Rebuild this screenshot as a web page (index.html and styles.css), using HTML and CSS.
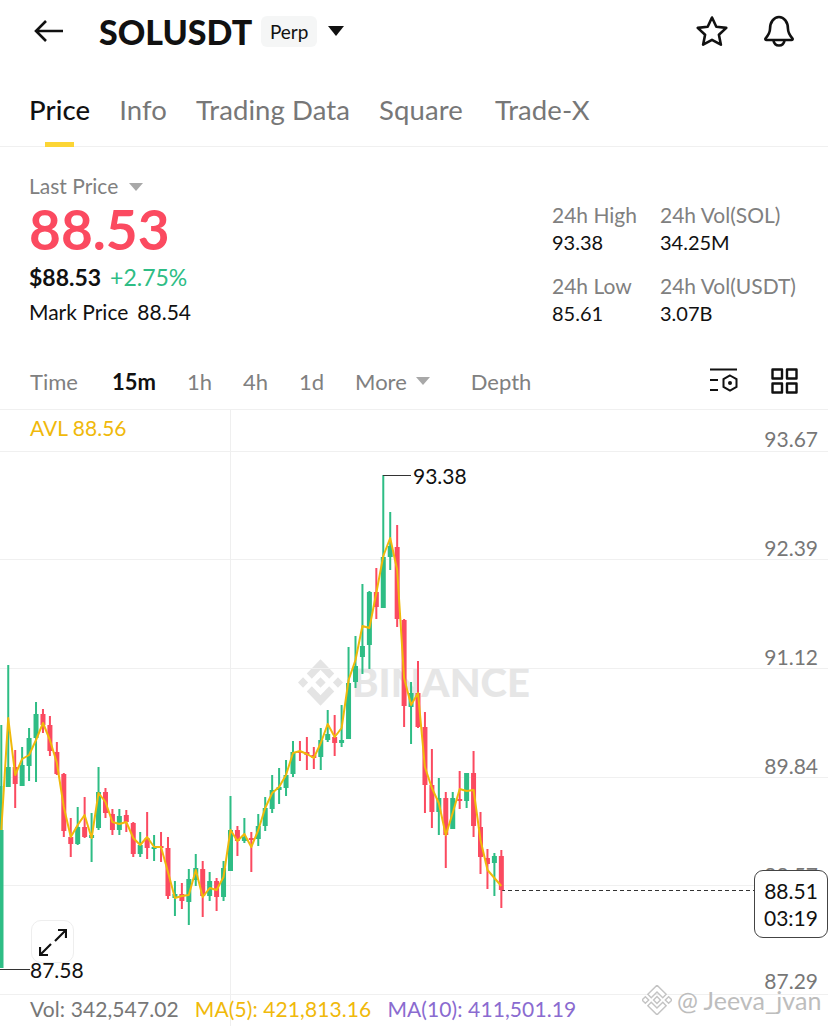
FILE: index.html
```html
<!DOCTYPE html>
<html lang="en">

<head>
    <meta charset="UTF-8">
    <meta name="viewport" content="width=device-width, initial-scale=1.0">
    <title>SOLUSDT Perp</title>
    <link rel="stylesheet" href="styles.css">
</head>

<body>

    <header class="top-bar">
        <svg class="back-icon" width="30" height="24" viewBox="0 0 30 24">
            <path d="M12 2 2 12l10 10M2 12h27" fill="none" stroke="#111" stroke-width="2.6" />
        </svg>
        <h1>SOLUSDT</h1>
        <span class="pill">Perp</span>
        <span class="caret caret-dark"></span>
        <div class="top-actions">
            <svg width="34" height="32" viewBox="0 0 34 32">
                <path d="M17 2.5l4.3 9.2 10 1.2-7.4 6.9 2 9.9L17 24.8l-8.9 4.9 2-9.9-7.4-6.9 10-1.2z" fill="none" stroke="#111" stroke-width="2.6" stroke-linejoin="round" />
            </svg>
            <svg width="32" height="34" viewBox="0 0 32 34">
                <path d="M7 15c0-7 4-12 9-12s9 5 9 12c0 4 1.5 6 4.5 9.5.5.8 0 1.5-1 1.5H3.500c-1 0-1.500-.7-1-1.500C5.500 21 7 19 7 15z" fill="none" stroke="#111" stroke-width="2.6" stroke-linejoin="round" />
                <path d="M10.5 26.500c.5 3 2.800 5 5.500 5s5-2 5.500-5" fill="none" stroke="#111" stroke-width="2.6" />
            </svg>
        </div>
    </header>

    <nav class="tabs">
        <a class="tab active">Price</a>
        <a class="tab">Info</a>
        <a class="tab">Trading Data</a>
        <a class="tab">Square</a>
        <a class="tab">Trade-X</a>
    </nav>

    <section class="summary">
        <div class="price-col">
            <div class="last-price">Last Price <span class="caret caret-grey"></span></div>
            <div class="big-price">88.53</div>
            <div class="usd-row"><b>$88.53</b> <span class="up">+2.75%</span></div>
            <div class="mark-row"><span>Mark Price</span><span>88.54</span></div>
        </div>
        <div class="stats">
            <div class="stat">
                <span class="stat-label">24h High</span>
                <span class="stat-value">93.38</span>
            </div>
            <div class="stat">
                <span class="stat-label">24h Vol(SOL)</span>
                <span class="stat-value">34.25M</span>
            </div>
            <div class="stat">
                <span class="stat-label">24h Low</span>
                <span class="stat-value">85.61</span>
            </div>
            <div class="stat">
                <span class="stat-label">24h Vol(USDT)</span>
                <span class="stat-value">3.07B</span>
            </div>
        </div>
    </section>

    <div class="periods">
        <span class="period p-time">Time</span>
        <span class="period p-15m">15m</span>
        <span class="period">1h</span>
        <span class="period">4h</span>
        <span class="period">1d</span>
        <span class="period p-more">More</span>
        <span class="caret caret-grey"></span>
        <span class="period">Depth</span>
        <div class="period-icons">
            <svg width="28" height="26" viewBox="0 0 28 26">
                <path d="M0 1.500h27M0 12h8M0 22h8" fill="none" stroke="#111" stroke-width="2" />
                <path d="M20 7.500l6.500 3.700v7.600L20 22.500l-6.500-3.700v-7.600z" fill="none" stroke="#111" stroke-width="2" />
                <circle cx="20" cy="15" r="2" fill="#111" />
            </svg>
            <svg width="27" height="26" viewBox="0 0 27 26">
                <path d="M1.500 1.500h9.500v9H1.500zM16 1.500h9.500v9H16zM1.500 15.500h9.500v9H1.500zM16 15.500h9.500v9H16z" fill="none" stroke="#111" stroke-width="2.4" stroke-linejoin="round" />
            </svg>
        </div>
    </div>

    <section class="chart" id="chart">
        <div class="wm-main">
            <svg width="45" height="47" viewBox="0 0 126 126" preserveAspectRatio="none">
                <path d="M38.73 53.2 63 28.93 87.29 53.22l14.13-14.13L63 .67 24.6 39.07zM0 63l14.13-14.13L28.26 63 14.13 77.13zM38.73 72.8 63 97.07l24.29-24.29 14.13 14.12L63 125.33 24.6 86.93zM97.74 63l14.13-14.13L126 63l-14.13 14.13zM77.33 63 63 48.67 48.7 62.97 63 77.3z" fill="#e4e4e4" />
            </svg>
            <span>BINANCE</span>
        </div>

        <svg id="chart-svg" class="chart-svg" width="828" height="616" viewBox="0 410 828 616"></svg>

        <div class="avl">AVL 88.56</div>

        <div class="axis-label axis-1">93.67</div>
        <div class="axis-label axis-2">92.39</div>
        <div class="axis-label axis-3">91.12</div>
        <div class="axis-label axis-4">89.84</div>
        <div class="axis-label axis-5">88.57</div>
        <div class="axis-label axis-6">87.29</div>

        <div class="peak-label peak-high">93.38</div>

        <button class="expand-btn">
            <svg width="28" height="28" viewBox="0 0 28 28">
                <path d="M19 2h8v8M27 2 16 13M1 19v8h8M1 27l11-11" fill="none" stroke="#111" stroke-width="2.2" />
            </svg>
        </button>

        <div class="peak-label peak-low">87.58</div>

        <div class="mark-box">
            <span>88.51</span>
            <span>03:19</span>
        </div>

        <div class="vol-row">
            <span class="vol">Vol: 342,547.02</span>
            <span class="ma5">MA(5): 421,813.16</span>
            <span class="ma10">MA(10): 411,501.19</span>
        </div>

        <div class="wm-user">
            <svg width="30" height="30" viewBox="0 0 126 126">
                <path d="M38.73 53.2 63 28.93 87.29 53.22l14.13-14.13L63 .67 24.6 39.07zM0 63l14.13-14.13L28.26 63 14.13 77.13zM38.73 72.8 63 97.07l24.29-24.29 14.13 14.12L63 125.33 24.6 86.93zM97.74 63l14.13-14.13L126 63l-14.13 14.13zM77.33 63 63 48.67 48.7 62.97 63 77.3z" fill="#fff" stroke="#c4c4c4" stroke-width="6" />
            </svg>
            <span>@ Jeeva_jvan</span>
        </div>
    </section>

    <script src="chart.js"></script>

</body>

</html>
```

FILE: styles.css
```css
body, html {
    margin: 0;
    padding: 0;
    background: #fff;
    color: #111;
    font-family: 'Lato', sans-serif;
}

body {
    width: 828px;
    height: 1026px;
    overflow: hidden;
    display: flex;
    flex-direction: column;
}

/* top bar */
.top-bar {
    height: 62px;
    display: flex;
    align-items: center;
    padding: 0 33px 0 34px;
}

.back-icon {
    margin-right: 35px;
}

.top-bar h1 {
    font-size: 34px;
    font-weight: 900;
    margin: 0 9px 0 0;
}

.pill {
    width: 56px;
    height: 31px;
    line-height: 31px;
    text-align: center;
    background: #f5f6f6;
    border-radius: 6px;
    font-size: 19px;
    margin-right: 11px;
}

.caret {
    display: inline-block;
    width: 0;
    height: 0;
    border-left: 8px solid transparent;
    border-right: 8px solid transparent;
}

.caret-dark {
    border-top: 10px solid #111;
}

.caret-grey {
    border-left-width: 7px;
    border-right-width: 7px;
    border-top: 8px solid #a8a8a8;
}

.top-actions {
    margin-left: auto;
    display: flex;
    align-items: center;
    gap: 34px;
}

/* tabs */
.tabs {
    height: 85px;
    display: flex;
    gap: 29px;
    padding-left: 29px;
    border-bottom: 1px solid #f0f0f0;
    box-sizing: border-box;
}

.tab {
    font-size: 27.5px;
    line-height: 96px;
    color: #777;
    position: relative;
    letter-spacing: 0.1px;
}

.tab:last-child {
    margin-left: 3px;
}

.tab.active {
    color: #111;
    font-weight: 500;
}

.tab.active::after {
    content: "";
    position: absolute;
    left: 16px;
    bottom: -1px;
    width: 29px;
    height: 5px;
    background: #fcd535;
}

/* price summary */
.summary {
    height: 200px;
    display: flex;
    justify-content: space-between;
    box-sizing: border-box;
    padding: 26px 0 0 29px;
}

.last-price {
    font-size: 21px;
    line-height: 26px;
    color: #808080;
}

.last-price .caret {
    margin-left: 5px;
    vertical-align: 3px;
}

.big-price {
    font-size: 55px;
    font-weight: 700;
    line-height: 60px;
    color: #fb4a60;
}

.usd-row {
    font-size: 23px;
    line-height: 32px;
    margin-top: 2px;
}

.usd-row b {
    font-weight: 700;
}

.up {
    color: #2ebd85;
    margin-left: 3px;
}

.mark-row {
    font-size: 21px;
    line-height: 28px;
    margin-top: 5px;
    display: flex;
    gap: 9px;
}

.stats {
    width: 276px;
    display: grid;
    grid-template-columns: 108px 168px;
    grid-auto-rows: 71px;
    padding-top: 28px;
}

.stat {
    display: flex;
    flex-direction: column;
    gap: 1px;
    font-size: 20px;
    line-height: 27px;
}

.stat-label {
    color: #808080;
    font-size: 21px;
}

/* period row */
.periods {
    height: 63px;
    display: flex;
    align-items: center;
    padding: 6px 30px 0;
    font-size: 22px;
    color: #808080;
    border-bottom: 1px solid #f0f0f0;
    box-sizing: border-box;
}

.period {
    margin-right: 31px;
}

.p-time {
    margin-right: 34px;
}

.p-15m {
    color: #111;
    font-weight: 700;
}

.p-more {
    margin-right: 9px;
}

.periods .caret {
    margin-right: 41px;
}

.period-icons {
    margin-left: auto;
    display: flex;
    gap: 33px;
}

/* chart */
.chart {
    position: relative;
    flex: 1;
    font-size: 21px;
}

.chart-svg {
    position: absolute;
    left: 0;
    top: 0;
}

.avl {
    position: absolute;
    left: 30px;
    top: 5px;
    color: #f0b90b;
}

.axis-label {
    position: absolute;
    right: 10px;
    color: #777;
    line-height: 22px;
}

.axis-1 { top: 18px; }
.axis-2 { top: 127px; }
.axis-3 { top: 236px; }
.axis-4 { top: 345px; }
.axis-5 { top: 454px; }
.axis-6 { top: 560px; }

.peak-label {
    position: absolute;
    color: #111;
}

.peak-high { left: 413px; top: 53px; }
.peak-low { left: 30px; top: 547px; }

.mark-box {
    position: absolute;
    left: 754px;
    top: 460px;
    width: 72px;
    height: 66px;
    background: #fff;
    border: 1px solid #444;
    border-radius: 9px;
    display: flex;
    flex-direction: column;
    align-items: center;
    justify-content: center;
    line-height: 27px;
    color: #111;
}

.expand-btn {
    position: absolute;
    left: 31px;
    top: 510px;
    width: 43px;
    height: 43px;
    padding: 0;
    background: #fff;
    border: 1px solid #eee;
    border-radius: 10px;
    display: flex;
    align-items: center;
    justify-content: center;
}

.wm-main {
    position: absolute;
    left: 298px;
    top: 248px;
    display: flex;
    align-items: center;
    gap: 9px;
    font-size: 40px;
    font-weight: 900;
    color: #e6e6e6;
}

.vol-row {
    position: absolute;
    left: 30px;
    top: 586px;
    display: flex;
    gap: 16px;
    color: #777;
    letter-spacing: 0.1px;
}

.ma5 { color: #f0b90b; }
.ma10 { color: #8a6bd0; }

.wm-user {
    position: absolute;
    left: 642px;
    top: 575px;
    display: flex;
    align-items: center;
    gap: 5px;
    font-size: 25px;
    color: #bdbdbd;
}

.wm-user span {
    line-height: 20px;
}
```

FILE: chart.js
```js
const svg = document.getElementById('chart-svg');
const NS = 'http://www.w3.org/2000/svg';

const GREEN = '#2ebd85';
const RED = '#fb4a60';

// type, wick top, wick bottom, body top, body bottom
const candles = [
    ['g', 725, 786, 786, 968],
    ['g', 665, 787, 767, 787], ['r', 750, 808, 767, 784], ['g', 747, 786, 765, 786],
    ['g', 728, 781, 738, 766], ['g', 702, 782, 714, 738], ['r', 709, 733, 714, 725],
    ['r', 716, 756, 725, 751], ['r', 742, 775, 752, 774], ['r', 773, 837, 774, 831],
    ['r', 818, 857, 837, 844], ['g', 807, 845, 827, 844], ['r', 797, 838, 827, 837],
    ['g', 813, 862, 835, 838], ['g', 767, 830, 792, 828], ['r', 788, 818, 792, 813],
    ['r', 809, 835, 814, 830], ['g', 809, 835, 816, 830], ['r', 810, 832, 815, 822],
    ['r', 822, 857, 823, 854], ['g', 832, 857, 845, 854], ['r', 812, 859, 838, 848],
    ['g', 835, 861, 847, 848], ['r', 832, 862, 846, 847], ['r', 837, 899, 848, 896],
    ['g', 881, 916, 894, 898], ['r', 883, 909, 894, 901], ['g', 869, 925, 879, 902],
    ['g', 854, 886, 868, 880], ['r', 861, 917, 869, 896], ['g', 872, 901, 881, 896],
    ['r', 878, 911, 881, 897], ['g', 861, 901, 868, 897], ['g', 796, 871, 830, 871],
    ['r', 826, 856, 830, 841], ['g', 818, 843, 837, 841], ['r', 832, 872, 838, 840],
    ['g', 814, 846, 826, 839], ['g', 797, 831, 808, 826], ['g', 775, 813, 790, 809],
    ['g', 768, 804, 787, 790], ['g', 760, 796, 775, 788], ['g', 741, 777, 752, 774],
    ['r', 741, 761, 751, 752], ['r', 737, 770, 752, 755], ['r', 747, 769, 755, 758],
    ['g', 728, 770, 740, 757], ['g', 710, 742, 734, 740], ['r', 715, 756, 737, 743],
    ['g', 705, 747, 740, 743], ['g', 647, 739, 683, 739], ['g', 636, 688, 666, 682],
    ['g', 584, 674, 646, 657], ['g', 591, 669, 592, 645], ['r', 568, 619, 592, 607],
    ['g', 475, 608, 557, 608], ['g', 512, 570, 546, 557], ['r', 525, 627, 547, 619],
    ['r', 619, 727, 620, 706], ['g', 682, 744, 693, 707], ['r', 661, 728, 693, 727],
    ['r', 712, 813, 727, 785], ['r', 749, 828, 785, 812], ['g', 778, 835, 798, 812],
    ['r', 792, 868, 798, 835], ['g', 792, 829, 798, 829], ['r', 771, 809, 799, 801],
    ['g', 773, 808, 773, 801], ['r', 751, 837, 773, 826], ['r', 812, 874, 827, 857],
    ['r', 849, 889, 858, 864], ['g', 853, 896, 856, 863], ['r', 850, 908, 856, 890]
];

const maLine = [
    830, 718, 775, 759, 755, 740, 723, 740, 763, 807, 837, 825, 815, 838, 793, 802,
    822, 824, 822, 838, 845, 837, 847, 847, 872, 898, 896, 895, 870, 897, 888, 890,
    877, 830, 841, 834, 847, 830, 808, 793, 787, 775, 753, 751, 754, 758, 743, 724,
    737, 728, 680, 660, 626, 628, 593, 556, 538, 570, 678, 705, 693, 767, 788, 803,
    835, 813, 789, 791, 790, 840, 870, 878, 886
];

const gridRows = [451, 559, 668, 777, 885];

function add(tag, attrs) {
    const el = document.createElementNS(NS, tag);
    Object.keys(attrs).forEach((key) => el.setAttribute(key, attrs[key]));
    svg.appendChild(el);
    return el;
}

function xAt(i) {
    return 1.3 + i * 6.945;
}

gridRows.forEach((y) => {
    add('line', { x1: 0, x2: 828, y1: y + 0.5, y2: y + 0.5, stroke: '#f0f0f0', 'stroke-width': 1 });
});
add('line', { x1: 230.5, x2: 230.5, y1: 410, y2: 1026, stroke: '#efefef', 'stroke-width': 1 });
add('line', { x1: 0, x2: 828, y1: 994.5, y2: 994.5, stroke: '#f0f0f0', 'stroke-width': 1 });

// dashed line for the current price
add('line', { x1: 501, x2: 754, y1: 890.5, y2: 890.5, stroke: '#333', 'stroke-width': 1, 'stroke-dasharray': '4 3' });

candles.forEach((c, i) => {
    const x = xAt(i);
    const color = c[0] === 'g' ? GREEN : RED;
    add('rect', { x: x - 1, y: c[1], width: 2, height: c[2] - c[1], fill: color });
    if (i > 0) {
        add('rect', { x: x - 2.5, y: c[3], width: 5, height: Math.max(c[4] - c[3], 2), fill: color });
    } else {
        add('rect', { x: 0, y: 786, width: 2.5, height: 44, fill: color });
        add('rect', { x: 0, y: 830, width: 3.5, height: 138, fill: color });
    }
});

add('polyline', {
    points: maLine.map((y, i) => xAt(i).toFixed(1) + ',' + y).join(' '),
    fill: 'none',
    stroke: '#f0b90b',
    'stroke-width': 2,
    'stroke-linejoin': 'round'
});

// leader lines to the high and low labels
add('path', { d: 'M383 475.5H411M0 969.5H30', fill: 'none', stroke: '#333', 'stroke-width': 1 });
```
